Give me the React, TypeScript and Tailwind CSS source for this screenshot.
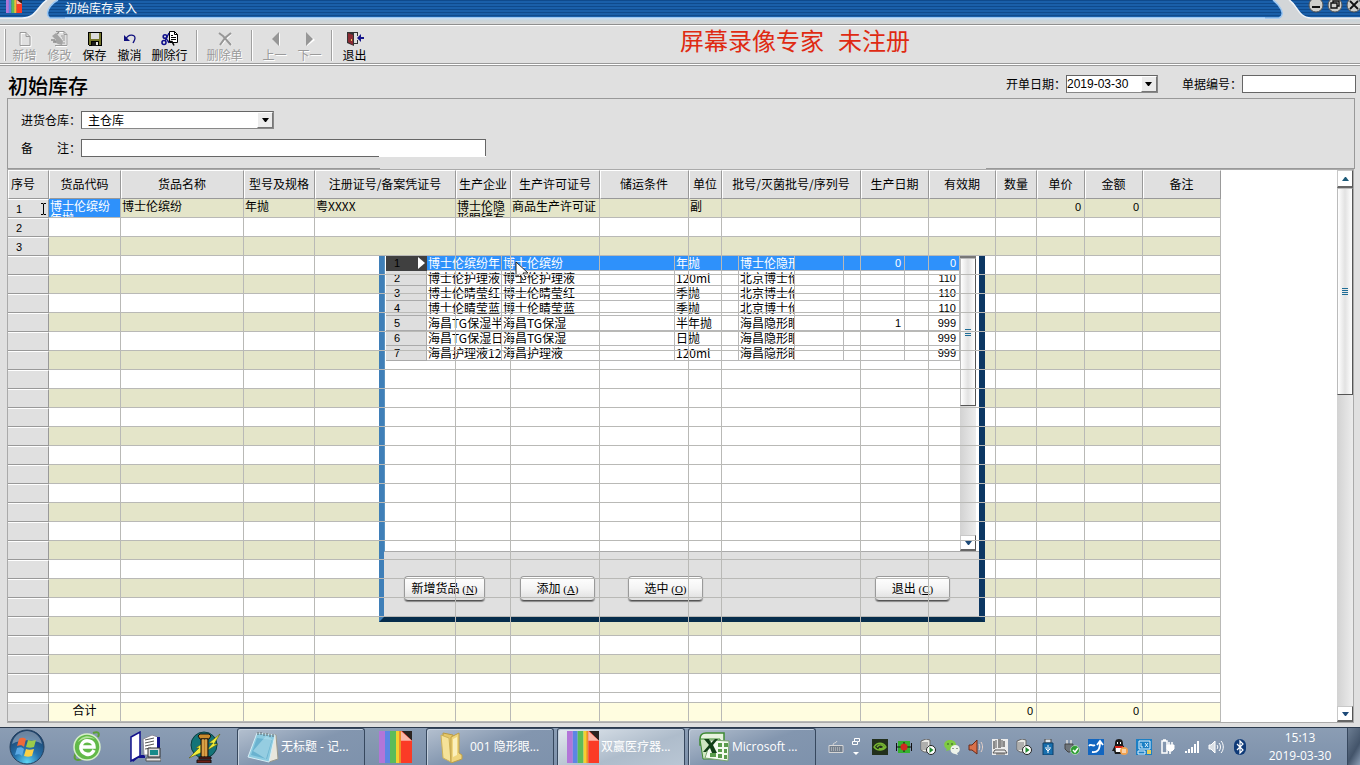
import React, { useState } from 'react';

interface IconProps {
    className?: string;
}

interface Column {
    title: string;
    width: number;
}

const COLUMNS: Column[] = [
    { title: '货品代码', width: 72 },
    { title: '货品名称', width: 123 },
    { title: '型号及规格', width: 71 },
    { title: '注册证号/备案凭证号', width: 141 },
    { title: '生产企业', width: 55 },
    { title: '生产许可证号', width: 89 },
    { title: '储运条件', width: 89 },
    { title: '单位', width: 33 },
    { title: '批号/灭菌批号/序列号', width: 139 },
    { title: '生产日期', width: 68 },
    { title: '有效期', width: 67 },
    { title: '数量', width: 41 },
    { title: '单价', width: 48 },
    { title: '金额', width: 58 },
    { title: '备注', width: 78 },
];

const FIRST_ROW = [
    '博士伦缤纷年抛', '博士伦缤纷', '年抛', '粤XXXX', '博士伦隐形眼镜有', '商品生产许可证', '', '副',
    '', '', '', '', '0', '0', '',
];
const TOTAL_ROW = ['合计', '', '', '', '', '', '', '', '', '', '', '0', '', '0', ''];
const EMPTY_ROW = COLUMNS.map(() => '');
const ROW_COUNT = 26;

const PICK_WIDTHS = [41, 75, 173, 64, 56, 49, 61, 55];
const PICK_ROWS = [
    ['博士伦缤纷年', '博士伦缤纷', '年抛', '博士伦隐形', '', '0', '0'],
    ['博士伦护理液', '博士伦护理液', '120ml', '北京博士伦', '', '', '110'],
    ['博士伦睛莹红', '博士伦睛莹红', '季抛', '北京博士伦', '', '', '110'],
    ['博士伦睛莹蓝', '博士伦睛莹蓝', '季抛', '北京博士伦', '', '', '110'],
    ['海昌TG保湿半', '海昌TG保湿', '半年抛', '海昌隐形眼', '', '1', '999'],
    ['海昌TG保湿日', '海昌TG保湿', '日抛', '海昌隐形眼', '', '', '999'],
    ['海昌护理液12', '海昌护理液', '120ml', '海昌隐形眼', '', '', '999'],
];

const isNumber = (text: string) => /^\d+$/.test(text);

/* ---------- toolbar icons ---------- */

const NewIcon = () => (
    <svg viewBox="0 0 16 16" className="w-4 h-4" fill="none">
        <path d="M4 2.5h7l3 3v10H4z" stroke="#fff" />
        <path d="M3 1.5h6l4 4v9H3zM9 1.5v4h4" stroke="#9a9a9a" />
    </svg>
);

const EditIcon = () => (
    <svg viewBox="0 0 18 16" className="w-[18px] h-4" fill="none">
        <path d="M6 1.5h7l3 3v11H5" stroke="#fff" />
        <path d="M5 .5h8l3 3v11H4M13 .5v3h3M10 5h4M11 7h3M12 9h2M10 12h4" stroke="#9a9a9a" />
        <path d="M1 5l4-3 7 8-1 4-4-1-5-3 3-1z" fill="#a4a4a4" />
        <path d="M0 9h4M2 11h3M6 3l2-2" stroke="#8e8e8e" strokeWidth="1.5" />
    </svg>
);

const SaveIcon = () => (
    <svg viewBox="0 0 16 16" className="w-4 h-4" shapeRendering="crispEdges">
        <path d="M1 1h14v14H2l-1-1z" fill="#000" />
        <path d="M2 2h2v6h8V2h2v12h-2v-4H4v4H2z" fill="#75752c" />
        <path d="M4 2h8v6H4z" fill="#dcdcdc" />
        <path d="M5 11h6v4H5z" fill="#1a1a1a" />
        <path d="M9 11h2v3H9z" fill="#e8e8e8" />
    </svg>
);

const UndoIcon = () => (
    <svg viewBox="0 0 16 16" className="w-4 h-4" fill="none">
        <path d="M2 4v6h6z" fill="#10107e" />
        <path d="M4 8c2-5 9-5 9-1 0 2-1 3-2 5" stroke="#10107e" strokeWidth="1.3" />
    </svg>
);

const DeleteRowIcon = () => (
    <svg viewBox="0 0 18 16" className="w-[18px] h-4" fill="none">
        <path d="M8.5 .5h5l3 3v8h-8z" fill="#fff" stroke="#000" />
        <path d="M13.500 .5v3h3M10 4.500h2M10 6.500h5M10 8.500h5" stroke="#000" />
        <path d="M7 10.500h4l2 4" stroke="#000" strokeWidth="1.5" />
        <circle cx="3" cy="11.500" r="2" stroke="#10108c" strokeWidth="1.6" />
        <circle cx="4" cy="5.500" r="1.800" stroke="#10108c" strokeWidth="1.6" />
        <path d="M4 10l4-8M5 7l3 5" stroke="#10108c" strokeWidth="1.4" />
    </svg>
);

const CrossIcon = () => (
    <svg viewBox="0 0 16 16" className="w-4 h-4" fill="none">
        <path d="M4 3l11 11M14 3L4 14" stroke="#fff" strokeWidth="1.500" />
        <path d="M2 2l4 3 8 9M14 2L8 7l-5 7" stroke="#979797" strokeWidth="2" />
    </svg>
);

const PrevIcon = () => (
    <svg viewBox="0 0 16 16" className="w-4 h-4">
        <path d="M13 2v13l-7-6z" fill="#fff" />
        <path d="M12 1v14L5 8z" fill="#979797" />
    </svg>
);

const NextIcon = () => (
    <svg viewBox="0 0 16 16" className="w-4 h-4">
        <path d="M5 2v13l8-6z" fill="#fff" />
        <path d="M4 1v14l7-7z" fill="#979797" />
    </svg>
);

const ExitIcon = () => (
    <svg viewBox="0 0 18 16" className="w-[18px] h-4">
        <path d="M1 1h11v4h-1V2H8v10h3V9h1v4H8v2L1 12z" fill="#333" />
        <path d="M2 2l5 2v10l-5-3z" fill="#8c2b34" />
        <path d="M5 8h1v2H5z" fill="#e8d060" />
        <path d="M11 7l4-4v3h3v2h-3v3z" fill="#16168a" />
    </svg>
);

/* ---------- taskbar icons ---------- */

const StartOrb = () => (
    <svg viewBox="0 0 36 36" className="w-9 h-9">
        <defs>
            <radialGradient id="orb" cx="50%" cy="95%" r="85%">
                <stop offset="0" stopColor="#5fd6f5" />
                <stop offset=".45" stopColor="#2673ad" />
                <stop offset="1" stopColor="#1c426c" />
            </radialGradient>
        </defs>
        <circle cx="18" cy="18" r="17" fill="url(#orb)" stroke="#24405e" />
        <path d="M3 15C5 5 13 2 18 2s13 3 15 13c-8-5-21-5-30 0z" fill="#fff" opacity=".35" />
        <path d="M10 10c3-2 5-1 7 0l-2 8c-2-2-4-2-7-1z" fill="#ef6a3a" />
        <path d="M19 11c3 1 5 1 8 0l-2 7c-3 1-5 1-8 0z" fill="#9ccb4b" />
        <path d="M8 19c3-1 5-1 7 1l-2 7c-2-2-4-2-7-1z" fill="#5ba9e4" />
        <path d="M17 20c2 1 5 1 8 0l-2 7c-3 1-5 1-8 0z" fill="#fbd045" />
    </svg>
);

const BrowserIcon = () => (
    <svg viewBox="0 0 28 32" className="w-7 h-8">
        <path d="M20 2c5-2 7 0 5 4M3 22c-3 5-1 9 6 6" fill="none" stroke="#5aa036" strokeWidth="2" />
        <circle cx="14" cy="16" r="13" fill="#62b948" stroke="#d6efca" strokeWidth="1.5" />
        <path d="M5 11c3-6 11-8 17-3-6-2-12-1-17 3z" fill="#b4e39f" />
        <path d="M21 19c-2 4-5 5-8 4s-6-4-5-8 4-6 8-5 5 3 5 6H9" fill="none" stroke="#fff" strokeWidth="3.500" />
    </svg>
);

const BookIcon = () => (
    <svg viewBox="0 0 32 32" className="w-8 h-8">
        <path d="M2 6l9-5v24l-9 5z" fill="#fff" stroke="#12128c" strokeWidth="1.500" />
        <path d="M3 29l9-5h4v3H9l-5 4z" fill="#12128c" />
        <path d="M14 8l9-4 6 2v18H15z" fill="#fff" stroke="#8a8a9a" />
        <path d="M16 9l9-2M16 12l9-2M16 15l9-2M16 18l6-1" stroke="#555" />
        <path d="M28 6h3v16h-3z" fill="#12128c" />
        <path d="M19 17h12v9H19z" fill="#d8d8d8" stroke="#333" />
        <path d="M21 19h8v5h-8z" fill="#168a8a" />
        <path d="M17 27h15v3H17z" fill="#e4e4e4" stroke="#555" />
    </svg>
);

const PillarIcon = () => (
    <svg viewBox="0 0 32 32" className="w-8 h-8">
        <circle cx="15" cy="14" r="13" fill="#137478" stroke="#0b3c40" />
        <path d="M31 3l-11 9h4l-7 8 12-7h-4zM0 27l10-10H7l8-6-2 9h3z" fill="#f0ee3a" stroke="#5c5a10" strokeWidth=".6" />
        <path d="M9 5l2-2h9l2 2-2 3h-9z" fill="#c88a2c" stroke="#111" />
        <path d="M12 8h7v18h-7z" fill="#bd7c28" stroke="#111" />
        <path d="M14 8v18M17 8v18" stroke="#f2c568" />
        <path d="M10 26h12v2H10zM8 29h14v3H8z" fill="#6c2016" stroke="#111" />
    </svg>
);

const NotepadIcon = () => (
    <svg viewBox="0 0 32 32" className="w-8 h-8">
        <path d="M10 2l19 2 2 24-9 3z" fill="#e8e6dc" stroke="#9c9a8c" />
        <path d="M10 2l18 2-6 27L1 26z" fill="#8ccbe0" stroke="#d7eef5" />
        <path d="M10 7l15 2-5 19L4 24z" fill="#6ab2cf" />
        <path d="M6 20L19 5l6 3-6 20z" fill="#b3dfec" opacity=".6" />
        <path d="M11 1v3M14 1v3M17 2v3M20 2v3M23 3v3M26 3v3" stroke="#59626b" />
    </svg>
);

const RainbowIcon: React.FC<IconProps> = ({ className }) => (
    <svg viewBox="0 0 33 33" className={className} preserveAspectRatio="none">
        <path d="M0 0h6v33H0z" fill="#b276d8" />
        <path d="M6 0h5v33H6z" fill="#5c86e4" />
        <path d="M11 0h6v33h-6z" fill="#5cbc5a" />
        <path d="M17 0h4v33h-4z" fill="#f3d030" />
        <path d="M20 0h2v33h-2z" fill="#ee8f28" />
        <path d="M22 0h11v33H22z" fill="#fb3b26" />
        <path d="M23 0h10v10z" fill="#2b2320" />
        <path d="M22 0l11 10H22z" fill="#fbb7a8" />
    </svg>
);

const FolderIcon = () => (
    <svg viewBox="0 0 26 32" className="w-[26px] h-8">
        <path d="M4 2l10 2v27L5 27z" fill="#e6c766" stroke="#b99a42" />
        <path d="M2 4l8 3 2 24-8-4z" fill="#f5e299" stroke="#cdb25a" />
        <path d="M12 6l8-4v20l3 2v4l-11 4z" fill="#f0d67e" stroke="#bf9f46" />
        <path d="M14 8l4-2v18l-4 2z" fill="#fbf0bd" />
    </svg>
);

const SheetIcon = () => (
    <svg viewBox="0 0 32 32" className="w-8 h-8">
        <path d="M8 2h18v12H2V8q0-6 6-6z" fill="#e7f3de" stroke="#3f8a34" strokeWidth="1.500" />
        <path d="M2 8h20v20H5z" fill="#cfe6c2" stroke="#3f8a34" />
        <path d="M13 9l18 1-1 20-23-3z" fill="#f4faf0" stroke="#7ba672" />
        <path d="M20 12h4v4h-4zM26 12h4v4h-4zM20 18h4v3h-4zM26 18h3v4h-3zM12 22h6v4h-6zM20 23h4v4h-4zM26 24h3v4h-3z" fill="#5a9c4c" />
        <path d="M6 8h5l2 4 4-4h3l-5 6 4 8h-5l-2-5-4 4H5l6-7z" fill="#123f18" />
    </svg>
);

const KeyboardIcon = () => (
    <svg viewBox="0 0 16 14" className="w-4 h-[14px]" fill="none" stroke="#d6d6d6">
        <path d="M1 5.500h14v7H1z" fill="#747f8c" />
        <path d="M3 8h10M3 10h10" strokeDasharray="1 1" />
        <path d="M5 5c0-3 3-1 4-4" />
    </svg>
);

const ServerIcon = () => (
    <svg viewBox="0 0 16 16" className="w-4 h-4">
        <path d="M1 2l5-2 4 1v12H4l-3-2z" fill="#e8e8e4" stroke="#666" />
        <path d="M2 4h6M2 6h6M2 8h5M2 10h5" stroke="#777" />
        <circle cx="11" cy="11" r="4.500" fill="#fff" stroke="#222" />
        <path d="M9.500 8l4 3-4 3z" fill="#1f8a2e" />
    </svg>
);

const TRAY_ICONS = [
    <svg key="gpu" viewBox="0 0 16 16" className="w-4 h-4">
        <path d="M0 0h16v16H0z" fill="#22301c" />
        <path d="M2 8c3-5 9-5 12 0-3 4-9 4-12 0zM5 8c2-3 5-3 7 0-2 2-4 2-5 1" fill="none" stroke="#78b833" strokeWidth="1.400" />
    </svg>,
    <svg key="rec" viewBox="0 0 16 16" className="w-4 h-4">
        <path d="M2 2h12v12H2z" fill="#35b12f" />
        <path d="M0 4v8M16 4v8" stroke="#111" strokeWidth="2" />
        <path d="M0 8h16M8 3v10" stroke="#111" />
        <circle cx="8" cy="8" r="3.500" fill="#d12a20" />
    </svg>,
    <ServerIcon key="service" />,
    <svg key="chat" viewBox="0 0 16 16" className="w-4 h-4">
        <path d="M6 1c8 0 8 10 0 10l-4 1 1-2C-2 7 0 1 6 1z" fill="#7ecb42" />
        <path d="M11 6c6 0 6 7 2 8l1 2-3-1c-6 0-6-9 0-9z" fill="#eef3ea" />
        <path d="M4 4v2M8 4v2M9 9v1M13 9v1" stroke="#38542a" />
    </svg>,
    <svg key="snd" viewBox="0 0 16 16" className="w-4 h-4">
        <path d="M1 6h3l5-5v14l-5-4H1z" fill="#d9704a" stroke="#6b2a18" />
        <path d="M11 5c1 2 1 4 0 6M13 3c2 3 2 7 0 10" fill="none" stroke="#e8d2c8" />
    </svg>,
    <svg key="scan" viewBox="0 0 16 16" className="w-4 h-4">
        <path d="M0 0h16v16H0z" fill="#ececec" />
        <path d="M1 2h2v8H1zM6 0h3v9H6zM11 2h2v6h-2z" fill="#8a8a8a" />
        <path d="M4 1v8M10 1v7M3 11h10l2 3H1zM4 15h9" fill="none" stroke="#555" />
    </svg>,
    <ServerIcon key="service-2" />,
    <svg key="usb" viewBox="0 0 16 16" className="w-4 h-4">
        <path d="M5 0h6v4H5z" fill="#dfe6ec" stroke="#444" />
        <path d="M3 4h10v12H3z" fill="#176fae" stroke="#0f3f66" />
        <path d="M8 6v8M6 8v2l2 2 2-2V8" fill="none" stroke="#fff" />
    </svg>,
    <svg key="eject" viewBox="0 0 16 16" className="w-4 h-4">
        <path d="M3 1v4M7 1v4" stroke="#ddd" strokeWidth="1.500" />
        <path d="M1 5h8v5l-3 3H4l-3-3z" fill="#6d747a" stroke="#444" />
        <circle cx="11" cy="11" r="4.500" fill="#2f9e35" stroke="#d9f0da" strokeWidth=".6" />
        <path d="M9 11l2 2 3-4" fill="none" stroke="#fff" strokeWidth="1.500" />
    </svg>,
    <svg key="wave" viewBox="0 0 16 16" className="w-4 h-4">
        <path d="M0 0h16v16H0z" fill="#1266c0" />
        <path d="M1 7c2-3 3 1 6-1M4 13c6 1 8-3 8-10M9 6l3-4 3 4" fill="none" stroke="#fff" strokeWidth="1.800" />
    </svg>,
    <svg key="qq" viewBox="0 0 16 16" className="w-4 h-4">
        <path d="M7 0c4 0 4 3 4 6l3 5-2 1-2 3H3l-1-3-2 0 3-6c0-3 0-6 4-6z" fill="#1a1a1a" />
        <path d="M7 7c3 0 4 2 3 6H4c-1-4 0-6 3-6z" fill="#fff" />
        <path d="M3 7h8v2H3z" fill="#d8251c" />
        <path d="M5 3h1v2H5zM8 3h1v2H8z" fill="#fff" />
        <circle cx="12" cy="12" r="4" fill="#f2a24e" />
        <path d="M10 11h4M10 13h4" stroke="#fff" />
    </svg>,
    <svg key="gfx" viewBox="0 0 16 16" className="w-4 h-4">
        <path d="M0 0h16v16H0z" fill="#1b7fc4" />
        <path d="M3 2h11v8H3zM5 4v4h2M9 4l3 4M12 4L9 8M2 12h7v3H2z" fill="none" stroke="#e5f4ff" />
        <path d="M11 11h4v4h-4z" fill="#e6cf5b" />
    </svg>,
    <svg key="power" viewBox="0 0 16 16" className="w-4 h-4" fill="none" stroke="#fff">
        <path d="M2 2h5v12H2zM3 1h3" strokeWidth="1.500" />
        <path d="M7 6h7v4l-2 2H9l-2-2z" fill="#fff" />
        <path d="M9 3v3M12 3v3M10 12v3" strokeWidth="1.500" />
    </svg>,
    <svg key="net" viewBox="0 0 16 16" className="w-4 h-4" fill="#fff">
        <path d="M1 12h2v2H1zM4 10h2v4H4zM7 8h2v6H7zM10 5h2v9h-2zM13 2h2v12h-2z" />
    </svg>,
    <svg key="vol" viewBox="0 0 16 16" className="w-4 h-4" fill="none" stroke="#fff">
        <path d="M1 6h2l4-4v12l-4-4H1z" fill="#d8dee4" />
        <path d="M9 6c1 1 1 3 0 4M11 4c2 2 2 6 0 8M13 2c3 3 3 9 0 12" />
    </svg>,
    <svg key="bt" viewBox="0 0 16 16" className="w-4 h-4">
        <rect x="2" y="0" width="12" height="16" rx="6" fill="#0f3a78" />
        <path d="M5 5l6 6-3 3V2l3 3-6 6" fill="none" stroke="#fff" strokeWidth="1.200" />
    </svg>,
];

/* ---------- small controls ---------- */

const DropArrow = () => (
    <span className="w-4 shrink-0 bg-[#ececec] border border-t-white border-l-white border-r-[#777] border-b-[#777] flex items-center justify-center pointer-events-none">
        <svg viewBox="0 0 7 4" className="w-[7px] h-1">
            <path d="M0 0h7L4 4H3z" fill="#000" />
        </svg>
    </span>
);

interface ComboProps {
    id: string;
    value: string;
    className: string;
}

const Combo: React.FC<ComboProps> = ({ id, value, className }) => (
    <div className={`flex h-[18px] bg-white border border-[#666] border-r-[#888] border-b-[#888] ${className}`}>
        <select id={id} defaultValue={value} className="appearance-none flex-1 min-w-0 bg-white leading-4 focus:outline-none">
            <option>{value}</option>
        </select>
        <DropArrow />
    </div>
);

interface ToolButtonProps {
    icon: React.ReactNode;
    label: string;
    wide?: boolean;
    disabled?: boolean;
}

const ToolButton: React.FC<ToolButtonProps> = ({ icon, label, wide, disabled }) => (
    <button
        type="button"
        disabled={disabled}
        className={`h-9 flex flex-col items-center justify-end leading-4 ${wide ? 'w-[45px]' : 'w-[35px]'} ${disabled ? 'text-[#9a9a9a] [text-shadow:1px_1px_0_#fff]' : 'text-black'}`}
    >
        {icon}
        <span className="whitespace-nowrap">{label}</span>
    </button>
);

const ToolSeparator = () => <span className="w-[2px] h-[31px] mx-1 border-l border-l-[#a0a0a0] border-r border-r-white" />;

interface ScrollBarProps {
    thumb: string;
    upArrow?: boolean;
}

const ScrollBar: React.FC<ScrollBarProps> = ({ thumb, upArrow }) => (
    <div className="w-4 shrink-0 flex flex-col bg-[linear-gradient(90deg,#d2d2d2,#ececec)]">
        {upArrow ? (
            <button type="button" aria-label="向上滚动" className="h-[18px] bg-white border border-[#c8c8c8] border-r-[#555] border-b-2 border-b-[#666] flex items-center justify-center">
                <svg viewBox="0 0 7 4" className="w-[7px] h-1"><path d="M3 0h1l3 4H0z" fill="#1d5a78" /></svg>
            </button>
        ) : (
            <span className="h-[2px] bg-[#777]" />
        )}
        <div className={`bg-[linear-gradient(90deg,#fff,#e2e2e2_50%,#fff)] border border-[#bbb] border-r-[#555] border-b-[#555] flex flex-col gap-px items-center justify-center ${thumb}`}>
            {[0, 1, 2, 3].map((n) => (
                <span key={n} className="w-[6px] h-px bg-[#1f6d96]" />
            ))}
        </div>
        <button type="button" aria-label="向下滚动" className="mt-auto h-4 bg-white border border-[#c8c8c8] border-r-[#555] border-b-2 border-b-[#666] flex items-center justify-center">
            <svg viewBox="0 0 7 4" className="w-[7px] h-1"><path d="M0 0h7L4 4H3z" fill="#1d4a78" /></svg>
        </button>
    </div>
);

/* ---------- window parts ---------- */

const TitleBar = () => (
    <header className="h-6 flex bg-[linear-gradient(#c6dcf2_0_19px,#c9d4da_20px,#d6d6d6_24px)] text-white overflow-hidden">
        <div className="relative w-[65px] shrink-0">
            <svg viewBox="0 0 65 24" className="w-[65px] h-6">
                <defs>
                    <pattern id="lines" width="4" height="3" patternUnits="userSpaceOnUse">
                        <path d="M0 0h4v3H0z" fill="#1a5fa9" />
                        <path d="M0 0h4v1H0z" fill="#0f4a8c" />
                    </pattern>
                </defs>
                <path d="M0 0h65v20H0z" fill="#d3d6d8" />
                <path d="M0 0h47C38 5 37 18 22 18H0z" fill="url(#lines)" />
                <path d="M47 0C38 5 37 18 22 18H0" fill="none" stroke="#f0f4f8" strokeWidth="1.500" />
                <path d="M65 0h-7C50 4 44 14 50 18h15z" fill="url(#lines)" />
                <path d="M58 0C50 4 44 14 50 18h15" fill="none" stroke="#9cc8f4" strokeWidth="1.500" />
            </svg>
            <span className="absolute left-[6px] top-0">
                <RainbowIcon className="w-4 h-[13px]" />
            </span>
        </div>
        <div className="flex-1 h-[18px] border-b border-b-[#9cc8f4] bg-[repeating-linear-gradient(#0f4a8c_0_1px,#1a5fa9_1px_3px)] text-xs leading-4">
            初始库存录入
        </div>
        <div className="relative w-[95px] shrink-0">
            <svg viewBox="0 0 95 24" className="w-[95px] h-6">
                <path d="M0 0h95v20H0z" fill="#d3d6d8" />
                <path d="M0 0h8c5 4 14 14 6 18H0z" fill="url(#lines)" />
                <path d="M8 0c5 4 14 14 6 18H0" fill="none" stroke="#9cc8f4" strokeWidth="1.500" />
                <path d="M24 0c8 4 9 18 22 18h49V0z" fill="url(#lines)" />
                <path d="M24 0c8 4 9 18 22 18h49" fill="none" stroke="#f0f4f8" strokeWidth="1.500" />
            </svg>
            <div className="absolute right-[-2px] top-0 flex gap-[3px]">
                <button type="button" aria-label="最小化">
                    <svg viewBox="0 0 16 13" className="w-4 h-[13px]"><circle cx="8" cy="5" r="7" fill="#cfcfcb" stroke="#555" /><path d="M4 6h8v2H4z" fill="#111" /></svg>
                </button>
                <button type="button" aria-label="还原">
                    <svg viewBox="0 0 16 13" className="w-4 h-[13px]"><circle cx="8" cy="5" r="7" fill="#cfcfcb" stroke="#555" /><path d="M6 3V1h6v5h-2M4 3h6v5H4z" fill="none" stroke="#111" strokeWidth="1.400" /></svg>
                </button>
                <button type="button" aria-label="关闭">
                    <svg viewBox="0 0 16 13" className="w-4 h-[13px]"><circle cx="8" cy="5" r="7" fill="#cfcfcb" stroke="#555" /><path d="M4 1l8 8M12 1L4 9" stroke="#111" strokeWidth="1.800" /></svg>
                </button>
            </div>
        </div>
    </header>
);

const Toolbar = () => (
    <div className="h-[42px] flex items-center pl-1 border-t border-t-[#8f8f8f] border-b border-b-[#999] shadow-[inset_0_1px_0_#fff,inset_0_-1px_0_#fff,inset_0_-2px_0_#999]">
        <span className="w-[2px] h-8 border-l border-l-white border-r border-r-[#a0a0a0]" />
        <span className="w-px" />
        <ToolButton icon={<NewIcon />} label="新增" disabled />
        <ToolButton icon={<EditIcon />} label="修改" disabled />
        <ToolButton icon={<SaveIcon />} label="保存" />
        <ToolButton icon={<UndoIcon />} label="撤消" />
        <ToolButton icon={<DeleteRowIcon />} label="删除行" wide />
        <ToolSeparator />
        <ToolButton icon={<CrossIcon />} label="删除单" wide disabled />
        <ToolSeparator />
        <ToolButton icon={<PrevIcon />} label="上一" disabled />
        <ToolButton icon={<NextIcon />} label="下一" disabled />
        <ToolSeparator />
        <ToolButton icon={<ExitIcon />} label="退出" />
    </div>
);

const FormHeader = () => {
    const [billNo, setBillNo] = useState('');
    const [remark, setRemark] = useState('');

    return (
        <section>
            <div className="h-8 flex items-center pl-2 pr-1">
                <h1 className="text-xl leading-6 font-medium pt-2">初始库存</h1>
                <div className="ml-auto flex items-center pt-1">
                    <label htmlFor="bill-date">开单日期：</label>
                    <Combo id="bill-date" value="2019-03-30" className="w-[92px] mr-6 font-[Liberation_Sans,sans-serif]" />
                    <label htmlFor="bill-no">单据编号：</label>
                    <input
                        id="bill-no"
                        value={billNo}
                        onChange={(e) => setBillNo(e.target.value)}
                        className="w-[114px] h-[18px] px-1 bg-white border border-[#666] focus:outline-none"
                    />
                </div>
            </div>
            <div className="relative ml-[7px] mr-[5px] border border-[#999] pl-[13px] pt-3 pb-[11px] flex flex-col gap-[10px]">
                {/* repaint trail left above the popup */}
                <div className="absolute left-[372px] -bottom-px w-[606px] h-2 bg-[#e0e0e0]" />
                <div className="flex items-center h-[18px]">
                    <label htmlFor="warehouse" className="w-[60px]">进货仓库：</label>
                    <Combo id="warehouse" value="主仓库" className="w-[193px] pl-[6px]" />
                </div>
                <div className="flex items-center h-[18px]">
                    <label htmlFor="remark" className="w-[60px] whitespace-pre">备　　注：</label>
                    <div className="relative flex w-[405px]">
                        <input
                            id="remark"
                            value={remark}
                            onChange={(e) => setRemark(e.target.value)}
                            className="flex-1 min-w-0 h-[18px] px-1 bg-white border border-[#666] focus:outline-none"
                        />
                        <span className="absolute right-0 bottom-0 w-[107px] h-px bg-white" />
                    </div>
                </div>
            </div>
        </section>
    );
};

interface DialogButtonProps {
    label: string;
    hotkey: string;
    className: string;
}

const DialogButton: React.FC<DialogButtonProps> = ({ label, hotkey, className }) => (
    <button
        type="button"
        className={`h-[25px] rounded-[4px] border border-[#9a9a9a] border-b-[#555] bg-[linear-gradient(#fff,#f4f4f4_50%,#dedede)] shadow-[0_1px_1px_#888] leading-5 ${className}`}
    >
        {label} <span className="font-[Liberation_Serif,serif] text-[11px]">(<u>{hotkey}</u>)</span>
    </button>
);

const PickDialog = () => (
    <div
        role="dialog"
        aria-label="选择货品"
        className="absolute left-[371px] top-[86px] z-10 w-[606px] h-[366px] flex flex-col bg-[#e0e0e0] border-l-[5px] border-l-[#3f7fb8] border-r-[6px] border-r-[#0c3763] border-b-[5px] border-b-[#062d4c]"
    >
        <div className="flex h-[296px] bg-white border-l border-l-[#5b93bf] border-b border-b-[#aaa] pl-px pr-[3px]">
            <div className="flex-1">
                <table className="table-fixed w-[574px] border-separate border-spacing-0">
                    <colgroup>
                        {PICK_WIDTHS.map((width, i) => (
                            <col key={i} style={{ width }} />
                        ))}
                    </colgroup>
                    <tbody>
                        {PICK_ROWS.map((row, r) => (
                            <tr key={r} className={r === 0 ? 'bg-[#2e91fb] text-white' : 'bg-white'}>
                                <th
                                    scope="row"
                                    className={`h-[15px] p-0 pl-2 font-normal text-left font-[Liberation_Sans,sans-serif] text-[11px] leading-[14px] border-r border-b ${r === 0 ? 'bg-[#404040] text-black border-[#404040]' : 'bg-[#dedede] border-[#aaa]'}`}
                                >
                                    <span className="flex items-center justify-between pr-px">
                                        {r + 1}
                                        {r === 0 && (
                                            <svg viewBox="0 0 7 12" className="w-[7px] h-3"><path d="M0 0l7 6-7 6z" fill="#fff" /></svg>
                                        )}
                                    </span>
                                </th>
                                {row.map((text, c) => (
                                    <td key={c} className={`h-[15px] p-0 border-r border-b border-[#b8b8b8] ${isNumber(text) ? 'text-right font-[Liberation_Sans,sans-serif] text-[11px]' : ''}`}>
                                        <div className={`h-[14px] leading-[14px] overflow-hidden whitespace-nowrap ${isNumber(text) ? 'pr-[3px]' : 'pl-px'}`}>{text}</div>
                                    </td>
                                ))}
                            </tr>
                        ))}
                    </tbody>
                </table>
            </div>
            <ScrollBar thumb="h-[148px]" />
        </div>
        <div className="flex-1 flex items-center pl-5 pr-[29px] pt-2">
            <DialogButton label="新增货品" hotkey="N" className="w-[81px] mr-[35px]" />
            <DialogButton label="添加" hotkey="A" className="w-[75px] mr-[33px]" />
            <DialogButton label="选中" hotkey="O" className="w-[75px]" />
            <DialogButton label="退出" hotkey="C" className="w-[75px] ml-auto" />
        </div>
        <svg viewBox="0 0 14 20" className="absolute left-[131px] top-[5px] w-[14px] h-5">
            <path d="M1 1v15l4-3 3 6 3-1-3-6h5z" fill="#fff" stroke="#222" />
        </svg>
    </div>
);

interface GridRowProps {
    index: string;
    cells: string[];
    total?: boolean;
    selected?: boolean;
}

const GridRow: React.FC<GridRowProps> = ({ index, cells, total, selected }) => (
    <tr className={total ? 'bg-[#fffde0]' : ''}>
        <th scope="row" className="h-[19px] p-0 pl-2 bg-[#e0e0e0] border-r border-b border-[#999] border-t border-t-white font-normal text-left font-[Liberation_Sans,sans-serif] text-[11px] leading-4">
            <span className="flex items-center justify-between pr-px">
                {index}
                {selected && (
                    <svg viewBox="0 0 7 12" className="w-[7px] h-3" fill="none" stroke="#000">
                        <path d="M1 .5h2l.500 1 .5-1h2M1 11.500h2l.500-1 .5 1h2M3.500 1v10" />
                    </svg>
                )}
            </span>
        </th>
        {cells.map((text, c) => (
            <td key={c} className={`h-[19px] p-0 border-r border-b border-[#b9b9b6] ${selected && c === 0 ? 'bg-[#2e91fb] text-white' : ''}`}>
                <div
                    className={`h-[18px] px-px overflow-hidden break-all ${isNumber(text) ? 'text-right pr-[3px] leading-4 font-[Liberation_Sans,sans-serif] text-[11px]' : 'pt-px leading-3'} ${total && c === 0 ? 'text-center' : ''}`}
                >
                    {text}
                </div>
            </td>
        ))}
    </tr>
);

const StockGrid = () => (
    <div className="ml-[7px] mr-[6px] border border-[#aaa] bg-white flex">
        <div className="relative w-[1213px] bg-[repeating-linear-gradient(#e4e5c9_29px_48px,#fff_48px_67px)]">
            <PickDialog />
            {/* grid lines are painted above the popup */}
            <table className="relative z-20 pointer-events-none table-fixed w-[1213px] border-separate border-spacing-0">
                <colgroup>
                    <col className="w-[41px]" />
                    {COLUMNS.map((col) => (
                        <col key={col.title} style={{ width: col.width }} />
                    ))}
                </colgroup>
                <thead>
                    <tr>
                        <th className="h-[29px] p-0 pb-px pl-[2px] text-left font-normal bg-[#e0e0e0] border border-t-white border-l-white border-r-[#999] border-b-[#999]">序号</th>
                        {COLUMNS.map((col) => (
                            <th key={col.title} className="h-[29px] p-0 pb-px pr-px whitespace-nowrap font-normal bg-[#e0e0e0] border border-t-white border-l-white border-r-[#999] border-b-[#999]">
                                {col.title}
                            </th>
                        ))}
                    </tr>
                </thead>
                <tbody>
                    {Array.from({ length: ROW_COUNT }, (_, r) => (
                        <GridRow
                            key={r}
                            index={r < 3 ? String(r + 1) : ''}
                            cells={r === 0 ? FIRST_ROW : EMPTY_ROW}
                            selected={r === 0}
                        />
                    ))}
                    <tr className="bg-white">
                        {['', ...EMPTY_ROW].map((_, c) => (
                            <td key={c} className="h-[10px] p-0 border-r border-b border-[#b9b9b6]" />
                        ))}
                    </tr>
                </tbody>
                <tfoot>
                    <GridRow index="" cells={TOTAL_ROW} total />
                </tfoot>
            </table>
        </div>
        <div className="ml-auto flex">
            <ScrollBar thumb="h-[207px]" upArrow />
        </div>
    </div>
);

interface TaskButtonProps {
    icon: React.ReactNode;
    label: string;
    active?: boolean;
}

const TaskButton: React.FC<TaskButtonProps> = ({ icon, label, active }) => (
    <button
        type="button"
        className={`w-32 h-full flex items-center pl-[7px] border border-b-0 border-[#37485e] rounded-t-[3px] shadow-[inset_1px_1px_0_#c4d0de] whitespace-nowrap ${active ? 'bg-[linear-gradient(160deg,#e2e8ee,#aebccb_60%,#b9c6d4)]' : 'bg-[linear-gradient(160deg,#b4c0cf,#8396af_50%,#7e92ac)]'}`}
    >
        <span className="w-9 flex justify-center shrink-0">{icon}</span>
        {label}
    </button>
);

const Taskbar = () => (
    <footer className="h-[38px] flex items-center bg-[linear-gradient(#8b9db4,#7d91ab)] border-t border-t-[#2b3a4d] text-white text-xs font-[Open_Sans,Noto_Sans_CJK_SC,sans-serif]">
        <div className="flex items-center gap-7 pl-[9px] pr-4">
            <button type="button" aria-label="开始"><StartOrb /></button>
            <BrowserIcon />
            <BookIcon />
            <PillarIcon />
        </div>
        <TaskButton icon={<NotepadIcon />} label="无标题 - 记..." />
        <span className="w-[61px] flex justify-center"><RainbowIcon className="w-[33px] h-8" /></span>
        <div className="flex h-full gap-[3px]">
            <TaskButton icon={<FolderIcon />} label="001 隐形眼..." />
            <TaskButton icon={<RainbowIcon className="w-8 h-8" />} label="双赢医疗器..." active />
            <TaskButton icon={<SheetIcon />} label="Microsoft ..." />
        </div>
        <div className="ml-auto h-full flex items-center">
            <KeyboardIcon />
            <svg viewBox="0 0 8 18" className="w-2 h-[18px] mx-2" fill="none" stroke="#fff">
                <path d="M2.500 3V.5h5v3H6M.5 3.500h5v3h-5z" />
                <path d="M1 14h6l-3 3z" fill="#fff" stroke="none" />
            </svg>
            <div className="flex">
                {TRAY_ICONS.map((icon, i) => (
                    <span key={i} className="w-6 flex justify-center">{icon}</span>
                ))}
            </div>
            <div className="w-20 ml-2 mr-[7px] text-center leading-[18px]">
                <div>15:13</div>
                <div>2019-03-30</div>
            </div>
            <button type="button" aria-label="显示桌面" className="w-[13px] h-full border-l border-l-[#37485e] bg-[linear-gradient(120deg,#6c7d92,#43546a_60%,#8b9db4)]" />
        </div>
    </footer>
);

export default function App() {
    return (
        <div className="relative min-h-screen flex flex-col overflow-hidden bg-[#e0e0e0] text-black text-xs font-[Noto_Sans_CJK_SC,sans-serif]">
            <TitleBar />
            <Toolbar />
            <p className="absolute left-1/2 top-[26px] text-2xl leading-7 text-[#df2a12] flex gap-[14px] whitespace-nowrap">
                <span>屏幕录像专家</span>
                <span>未注册</span>
            </p>
            <main className="flex-1">
                <FormHeader />
                <StockGrid />
            </main>
            <Taskbar />
        </div>
    );
}
